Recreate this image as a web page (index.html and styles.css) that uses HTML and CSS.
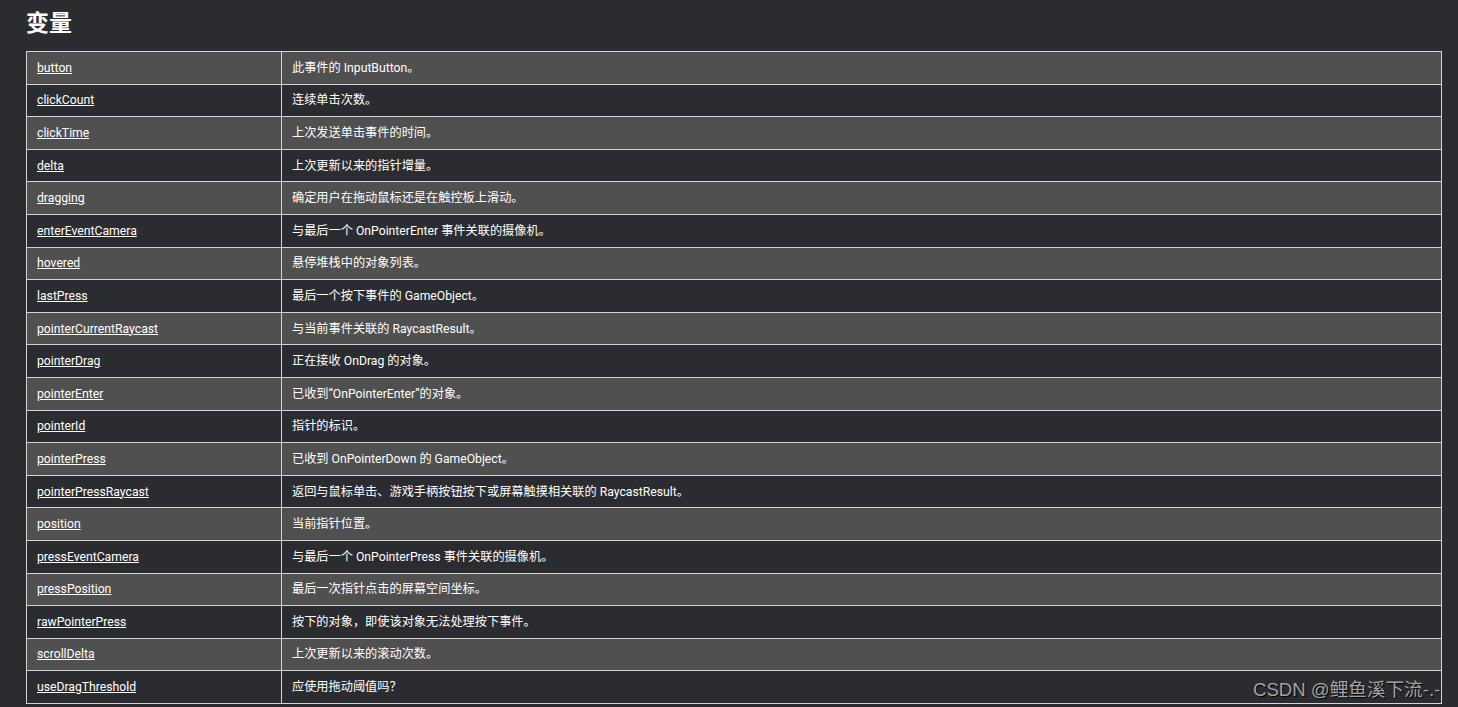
FILE: index.html
```html
<!DOCTYPE html>
<html lang="zh-CN">

<head>
    <meta charset="UTF-8">
    <meta name="viewport" content="width=device-width, initial-scale=1.0">
    <title>变量</title>
    <link rel="stylesheet" href="styles.css">
</head>

<body>

    <div class="page">
        <h2>变量</h2>

        <!-- 变量列表 -->
        <table class="vars">
            <tr><td class="name"><a href="#">button</a></td><td>此事件的 InputButton。</td></tr>
            <tr><td class="name"><a href="#">clickCount</a></td><td>连续单击次数。</td></tr>
            <tr><td class="name"><a href="#">clickTime</a></td><td>上次发送单击事件的时间。</td></tr>
            <tr><td class="name"><a href="#">delta</a></td><td>上次更新以来的指针增量。</td></tr>
            <tr><td class="name"><a href="#">dragging</a></td><td>确定用户在拖动鼠标还是在触控板上滑动。</td></tr>
            <tr><td class="name"><a href="#">enterEventCamera</a></td><td>与最后一个 OnPointerEnter 事件关联的摄像机。</td></tr>
            <tr><td class="name"><a href="#">hovered</a></td><td>悬停堆栈中的对象列表。</td></tr>
            <tr><td class="name"><a href="#">lastPress</a></td><td>最后一个按下事件的 GameObject。</td></tr>
            <tr><td class="name"><a href="#">pointerCurrentRaycast</a></td><td>与当前事件关联的 RaycastResult。</td></tr>
            <tr><td class="name"><a href="#">pointerDrag</a></td><td>正在接收 OnDrag 的对象。</td></tr>
            <tr><td class="name"><a href="#">pointerEnter</a></td><td>已收到“OnPointerEnter”的对象。</td></tr>
            <tr><td class="name"><a href="#">pointerId</a></td><td>指针的标识。</td></tr>
            <tr><td class="name"><a href="#">pointerPress</a></td><td>已收到 OnPointerDown 的 GameObject。</td></tr>
            <tr><td class="name"><a href="#">pointerPressRaycast</a></td><td>返回与鼠标单击、游戏手柄按钮按下或屏幕触摸相关联的 RaycastResult。</td></tr>
            <tr><td class="name"><a href="#">position</a></td><td>当前指针位置。</td></tr>
            <tr><td class="name"><a href="#">pressEventCamera</a></td><td>与最后一个 OnPointerPress 事件关联的摄像机。</td></tr>
            <tr><td class="name"><a href="#">pressPosition</a></td><td>最后一次指针点击的屏幕空间坐标。</td></tr>
            <tr><td class="name"><a href="#">rawPointerPress</a></td><td>按下的对象，即使该对象无法处理按下事件。</td></tr>
            <tr><td class="name"><a href="#">scrollDelta</a></td><td>上次更新以来的滚动次数。</td></tr>
            <tr><td class="name"><a href="#">useDragThreshold</a></td><td>应使用拖动阈值吗？</td></tr>
        </table>
    </div>

    <!-- 水印 -->
    <div class="watermark">CSDN @鲤鱼溪下流-.-</div>

</body>

</html>
```

FILE: styles.css
```css
body {
    background-color: #2b2c30;
    color: #ffffff;
    font-family: Roboto, "Noto Sans CJK SC", sans-serif;
    margin: 0;
    padding: 0;
}

.page {
    padding: 0 16px 0 26px;
}

h2 {
    font-size: 23px;
    font-weight: bold;
    line-height: 28px;
    margin: 0;
    padding: 10px 0 13px;
}

/* Tabulka */
.vars {
    width: 1416px;
    border-collapse: collapse;
    font-size: 12.2px;
}

.vars td {
    border: 1px solid #d4d4d4;
    padding: 6.8px 10px;
    line-height: 18px;
    vertical-align: middle;
}

.vars tr:nth-child(odd) {
    background-color: #505050;
}

.vars tr:nth-child(even) {
    background-color: #2b2c30;
}

.vars .name {
    width: 234px;
}

.vars a {
    color: #ffffff;
    text-decoration: underline;
}

/* Vodoznak */
.watermark {
    position: absolute;
    left: 1253px;
    top: 674px;
    font-family: "Liberation Sans", "Noto Sans CJK SC", sans-serif;
    font-size: 18.6px;
    color: #a3a3a3;
    text-shadow: 1px 1px 1px #000000;
    white-space: nowrap;
}
```
